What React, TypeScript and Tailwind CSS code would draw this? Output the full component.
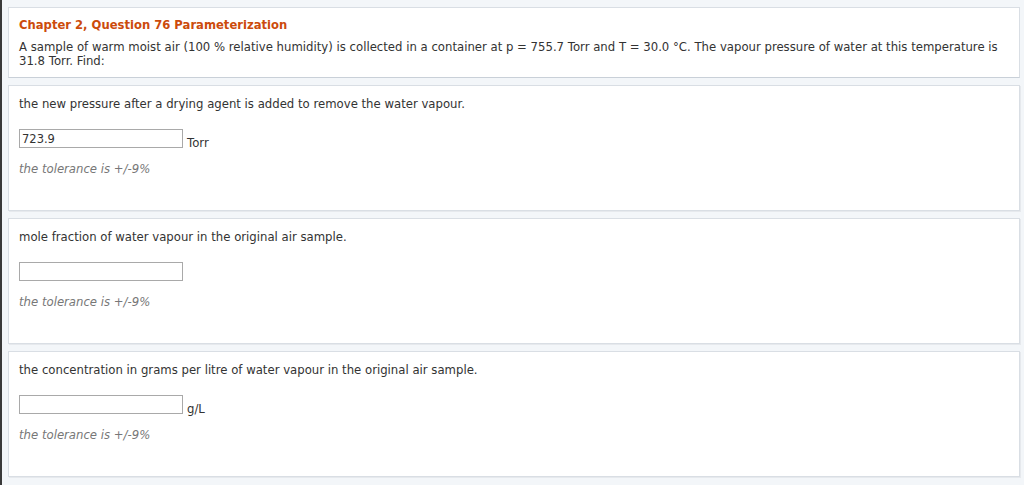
import React from 'react';

type PartProps = {
  prompt: string;
  value?: string;
  unit?: string;
};

function Part({ prompt, value, unit }: PartProps) {
  return (
    <section className="h-[126px] border border-[#d9dee4] bg-white px-[10px] pt-[11px] shadow-[1px_1px_0_#e6e9ed]">
      <p className="leading-[14px]">{prompt}</p>
      <div className="mt-[18px] flex items-end gap-[4px]">
        <input
          type="text"
          defaultValue={value ?? ''}
          className="h-[19px] w-[164px] border border-[#a9a9a9] bg-white px-[2px] text-[11.5px] text-[#333] outline-none"
          style={{ fontFamily: '"DejaVu Sans", Verdana, sans-serif' }}
        />
        {unit && <span className="mb-[-2px] leading-[14px]">{unit}</span>}
      </div>
      <p className="mt-[14px] italic leading-[14px] text-[#777]">the tolerance is +/-9%</p>
    </section>
  );
}

export default function App() {
  return (
    <div
      className="flex min-h-[485px] w-[1024px] bg-[#f3f6f9] text-[11.7px] text-[#333]"
      style={{ fontFamily: '"DejaVu Sans", Verdana, sans-serif' }}
    >
      <div className="w-[2px] shrink-0 bg-[#3a3a3a]" />
      <main className="flex flex-1 flex-col gap-[7px] pl-[6px] pr-[4px] pt-[7px]">
        <section className="border border-[#d9dee4] border-b-[#c9d0d8] bg-white px-[10px] pb-[9px] pt-[9px]">
          <h1 className="text-[11.6px] font-bold leading-[16px] text-[#cc4b0c]">
            Chapter 2, Question 76 Parameterization
          </h1>
          <p className="mt-[7px] leading-[14px]">
            A sample of warm moist air (100 % relative humidity) is collected in a container at p = 755.7 Torr and T = 30.0 °C. The vapour pressure of water at this temperature is 31.8 Torr. Find:
          </p>
        </section>
        <Part
          prompt="the new pressure after a drying agent is added to remove the water vapour."
          value="723.9"
          unit="Torr"
        />
        <Part prompt="mole fraction of water vapour in the original air sample." />
        <Part
          prompt="the concentration in grams per litre of water vapour in the original air sample."
          unit="g/L"
        />
      </main>
    </div>
  );
}
